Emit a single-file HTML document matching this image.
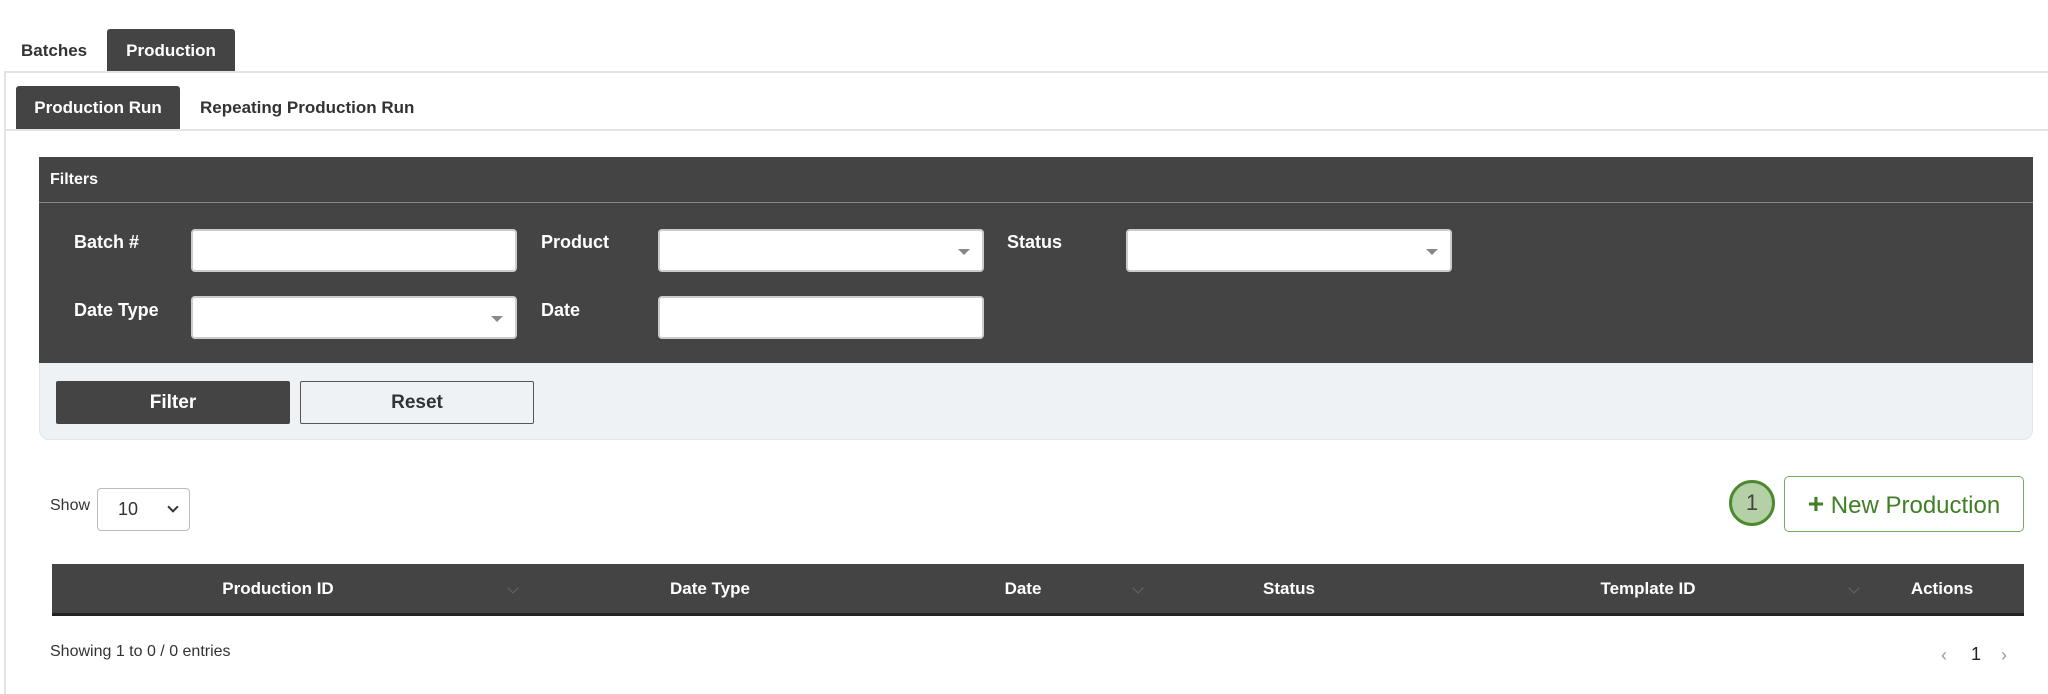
<!DOCTYPE html>
<html style="overflow:hidden;height:694px"><head><style>
*{box-sizing:border-box;margin:0;padding:0}
body{width:2048px;height:694px;background:#fff;font-family:"Liberation Sans",sans-serif;position:relative;overflow:hidden;color:#333}
.a{position:absolute}
.b{font-weight:bold}
.dark{background:#444;color:#fff}
.in{position:absolute;background:#fff;border:2px solid #ccc;border-radius:4px}
.car{position:absolute;right:12px;top:50%;margin-top:-2px;border-left:6px solid transparent;border-right:6px solid transparent;border-top:6px solid #888}
.th{position:absolute;top:0;height:50px;line-height:50px;font-size:17px;font-weight:bold;color:#fff;transform:translateX(-50%)}
.chev{position:absolute;top:20px;width:8px;height:8px;border-right:1.5px solid #666;border-bottom:1.5px solid #666;transform:rotate(45deg)}
</style></head><body>
<div class="a b" style="left:21px;top:29px;height:43px;line-height:43px;font-size:17px;color:#333">Batches</div>
<div class="a b dark" style="left:107px;top:29px;width:128px;height:43px;line-height:43px;text-align:center;font-size:17px;border-radius:3px 3px 0 0">Production</div>
<div class="a" style="left:4px;top:71px;width:2044px;height:623px;border-top:2px solid #e2e4e6;border-left:2px solid #e2e4e6"></div>
<div class="a b dark" style="left:16px;top:86px;width:164px;height:43px;line-height:43px;text-align:center;font-size:17px;border-radius:3px 3px 0 0">Production Run</div>
<div class="a b" style="left:200px;top:86px;height:43px;line-height:43px;font-size:17px">Repeating Production Run</div>
<div class="a" style="left:6px;top:129px;width:2042px;height:2px;background:#e2e4e6"></div>
<div class="a" style="left:39px;top:157px;width:1994px;height:283px;background:#eef2f5;border-radius:0 0 10px 10px;border:1px solid #e2e6ea;border-top:none"></div>
<div class="a dark" style="left:39px;top:157px;width:1994px;height:206px"></div>
<div class="a b" style="left:50px;top:157px;height:45px;line-height:45px;font-size:16px;color:#fff">Filters</div>
<div class="a" style="left:39px;top:202px;width:1994px;height:1px;background:#888"></div>
<div class="a b" style="left:74px;top:229px;line-height:26px;font-size:18px;color:#fff">Batch #</div>
<div class="in" style="left:191px;top:229px;width:326px;height:43px"></div>
<div class="a b" style="left:541px;top:229px;line-height:26px;font-size:18px;color:#fff">Product</div>
<div class="in" style="left:658px;top:229px;width:326px;height:43px"><div class="car"></div></div>
<div class="a b" style="left:1007px;top:229px;line-height:26px;font-size:18px;color:#fff">Status</div>
<div class="in" style="left:1126px;top:229px;width:326px;height:43px"><div class="car"></div></div>
<div class="a b" style="left:74px;top:297px;line-height:26px;font-size:18px;color:#fff">Date Type</div>
<div class="in" style="left:191px;top:296px;width:326px;height:43px"><div class="car"></div></div>
<div class="a b" style="left:541px;top:297px;line-height:26px;font-size:18px;color:#fff">Date</div>
<div class="in" style="left:658px;top:296px;width:326px;height:43px"></div>
<div class="a b dark" style="left:56px;top:381px;width:234px;height:43px;line-height:43px;text-align:center;font-size:19px;border-radius:2px">Filter</div>
<div class="a b" style="left:300px;top:381px;width:234px;height:43px;line-height:41px;text-align:center;font-size:19px;border:1.5px solid #555;border-radius:2px;color:#333">Reset</div>
<div class="a" style="left:50px;top:497px;font-size:16px">Show</div>
<div class="a" style="left:97px;top:488px;width:93px;height:43px;border:1.5px solid #bbb;border-radius:4px;font-size:18px;line-height:40px;padding-left:20px">10<span style="position:absolute;right:12px;top:14px;width:8px;height:8px;border-right:2px solid #333;border-bottom:2px solid #333;transform:rotate(45deg)"></span></div>
<div class="a" style="left:1729px;top:480px;width:46px;height:46px;border-radius:50%;background:#b5cfa6;border:3px solid #4a8a2e;text-align:center;line-height:40px;font-size:22px;color:#444">1</div>
<div class="a" style="left:1784px;top:476px;width:240px;height:56px;border:1.5px solid #7aa865;border-radius:5px;color:#3f7f26;font-size:24px;line-height:53px;text-align:center"><b style="font-size:28px">+</b> New Production</div>
<div class="a dark" style="left:52px;top:564px;width:1972px;height:52px;border-bottom:3px solid #222">
<div class="th" style="left:226px">Production ID</div><div class="chev" style="left:457px"></div>
<div class="th" style="left:658px">Date Type</div>
<div class="th" style="left:971px">Date</div><div class="chev" style="left:1082px"></div>
<div class="th" style="left:1237px">Status</div>
<div class="th" style="left:1596px">Template ID</div><div class="chev" style="left:1798px"></div>
<div class="th" style="left:1890px">Actions</div>
</div>
<div class="a" style="left:50px;top:643px;font-size:16px">Showing 1 to 0 / 0 entries</div>
<div class="a" style="left:1941px;top:645px;font-size:18px;color:#999">‹</div>
<div class="a" style="left:1971px;top:644px;font-size:18px;color:#222">1</div>
<div class="a" style="left:2001px;top:645px;font-size:18px;color:#999">›</div>
</body></html>
